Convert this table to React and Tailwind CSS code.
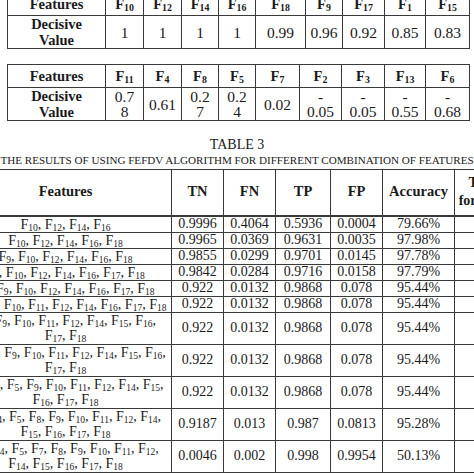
import React from "react";

const F = ({ n }) => (
  <>
    F<sub className="text-[0.68em] leading-none">{n}</sub>
  </>
);

const FList = ({ items }) =>
  items.map((n, i) => (
    <React.Fragment key={n}>
      <F n={n} />
      {i < items.length - 1 ? ", " : ""}
    </React.Fragment>
  ));

const tableOne = [
  { f: "10", v: ["1"], w: "w-[38px]" },
  { f: "12", v: ["1"], w: "w-[38px]" },
  { f: "14", v: ["1"], w: "w-[37px]" },
  { f: "16", v: ["1"], w: "w-[37px]" },
  { f: "18", v: ["0.99"], w: "w-[50px]" },
  { f: "9", v: ["0.96"], w: "w-[37px]" },
  { f: "17", v: ["0.92"], w: "w-[42px]" },
  { f: "1", v: ["0.85"], w: "w-[41px]" },
  { f: "15", v: ["0.83"], w: "w-[44px]" },
];

const tableTwo = [
  { f: "11", v: ["0.7", "8"], w: "w-[38px]" },
  { f: "4", v: ["0.61"], w: "w-[38px]" },
  { f: "8", v: ["0.2", "7"], w: "w-[37px]" },
  { f: "5", v: ["0.2", "4"], w: "w-[37px]" },
  { f: "7", v: ["0.02"], w: "w-[44px]" },
  { f: "2", v: ["-", "0.05"], w: "w-[42px]" },
  { f: "3", v: ["-", "0.05"], w: "w-[43px]" },
  { f: "13", v: ["-", "0.55"], w: "w-[41px]" },
  { f: "6", v: ["-", "0.68"], w: "w-[44px]" },
];

const results = [
  { lines: [["10", "12", "14", "16"]], v: ["0.9996", "0.4064", "0.5936", "0.0004", "79.66%"] },
  { lines: [["10", "12", "14", "16", "18"]], v: ["0.9965", "0.0369", "0.9631", "0.0035", "97.98%"] },
  { lines: [["9", "10", "12", "14", "16", "18"]], v: ["0.9855", "0.0299", "0.9701", "0.0145", "97.78%"] },
  { lines: [["9", "10", "12", "14", "16", "17", "18"]], v: ["0.9842", "0.0284", "0.9716", "0.0158", "97.79%"] },
  { lines: [["1", "9", "10", "12", "14", "16", "17", "18"]], v: ["0.922", "0.0132", "0.9868", "0.078", "95.44%"] },
  { lines: [["1", "9", "10", "11", "12", "14", "16", "17", "18"]], v: ["0.922", "0.0132", "0.9868", "0.078", "95.44%"] },
  { lines: [["1", "9", "10", "11", "12", "14", "15", "16"], ["17", "18"]], v: ["0.922", "0.0132", "0.9868", "0.078", "95.44%"] },
  { lines: [["1", "4", "9", "10", "11", "12", "14", "15", "16"], ["17", "18"]], v: ["0.922", "0.0132", "0.9868", "0.078", "95.44%"] },
  { lines: [["1", "4", "5", "9", "10", "11", "12", "14", "15"], ["16", "17", "18"]], v: ["0.922", "0.0132", "0.9868", "0.078", "95.44%"] },
  { lines: [["1", "4", "5", "8", "9", "10", "11", "12", "14"], ["15", "16", "17", "18"]], v: ["0.9187", "0.013", "0.987", "0.0813", "95.28%"] },
  { lines: [["1", "4", "5", "7", "8", "9", "10", "11", "12"], ["14", "15", "16", "17", "18"]], v: ["0.0046", "0.002", "0.998", "0.9954", "50.13%"] },
];

function SmallTable({ cols, className }) {
  return (
    <table className={`table-fixed border-collapse w-[462px] ${className}`}>
      <colgroup>
        <col className="w-[98px]" />
        {cols.map((c) => (
          <col key={c.f} className={c.w} />
        ))}
      </colgroup>
      <tbody>
        <tr className="h-[23px]">
          <th className="border border-[#3a3a3a] text-[14.5px] font-bold leading-[15px]">Features</th>
          {cols.map((c) => (
            <th key={c.f} className="border border-[#3a3a3a] text-[14.5px] font-bold leading-[15px]">
              <F n={c.f} />
            </th>
          ))}
        </tr>
        <tr className="h-[32px]">
          <th className="border border-[#3a3a3a] text-[14.5px] font-bold leading-[16px]">
            Decisive
            <br />
            Value
          </th>
          {cols.map((c) => (
            <td key={c.f} className="border border-[#3a3a3a] text-center text-[15.5px] leading-[15px]">
              {c.v.map((line, i) => (
                <div key={i}>{line}</div>
              ))}
            </td>
          ))}
        </tr>
      </tbody>
    </table>
  );
}

export default function App() {
  return (
    <div className="w-[474px] h-[474px] overflow-hidden bg-white text-[#1a1a1a] font-['Liberation_Serif',serif]">
      <SmallTable cols={tableOne} className="ml-[7px] -mt-[8px]" />
      <SmallTable cols={tableTwo} className="ml-[7px] mt-[15px]" />

      <div className="mt-[16px] text-center text-[14px] leading-[16px]">TABLE 3</div>
      <div className="whitespace-nowrap text-center text-[11.1px] leading-[14px]">
        THE RESULTS OF USING FEFDV ALGORITHM FOR DIFFERENT COMBINATION OF FEATURES
      </div>

      <table className="table-fixed border-collapse w-[591px] -ml-[41px] mt-[2px]">
        <colgroup>
          <col className="w-[212px]" />
          <col className="w-[52px]" />
          <col className="w-[52px]" />
          <col className="w-[55px]" />
          <col className="w-[52px]" />
          <col className="w-[72px]" />
          <col className="w-[96px]" />
        </colgroup>
        <thead>
          <tr className="h-[46px]">
            {["Features", "TN", "FN", "TP", "FP", "Accuracy"].map((h) => (
              <th key={h} className="border border-b-2 border-[#3a3a3a] text-[14.5px] font-bold">
                {h}
              </th>
            ))}
            <th className="border border-b-2 border-[#3a3a3a] text-[14px] font-bold leading-[18px] whitespace-nowrap">
              Time taken
              <br />
              for training (s)
            </th>
          </tr>
        </thead>
        <tbody>
          {results.map((r, i) => (
            <tr key={i} className={r.lines.length > 1 ? "h-[32px]" : "h-[16px]"}>
              <td className="border border-[#3a3a3a] text-center text-[14px] leading-[15px] whitespace-nowrap">
                {r.lines.map((l, j) => (
                  <div key={j} className="h-[15px]">
                    <FList items={l} />
                    {j < r.lines.length - 1 ? "," : ""}
                  </div>
                ))}
              </td>
              {r.v.map((v, j) => (
                <td key={j} className="border border-[#3a3a3a] text-center text-[14px] leading-[14px]">
                  {v}
                </td>
              ))}
              <td className="border border-[#3a3a3a]" />
            </tr>
          ))}
        </tbody>
      </table>
    </div>
  );
}
